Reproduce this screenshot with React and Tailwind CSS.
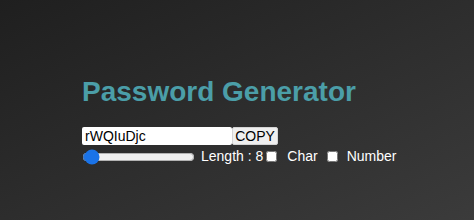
import { useState } from 'react';

const App = () => {
    const [length, setLength] = useState(8);

    return (
        <div className="w-[474px] h-[220px] bg-gradient-to-br from-[#1f1f1f] via-[#2d2d2d] to-[#3b3b3b] font-['Liberation_Sans',Arial,sans-serif] overflow-hidden">
            <div className="pl-[82px] pt-[76px]">
                {/* Title */}
                <h1 className="text-[28px] leading-[32px] font-bold text-[#4b9ea8]">Password Generator</h1>

                {/* Password + copy */}
                <div className="flex mt-[19px] h-[18px]">
                    <input
                        type="text"
                        readOnly
                        value="rWQIuDjc"
                        className="w-[150px] h-[18px] bg-white text-black text-[14px] px-[3px] border-0 outline-none rounded-[2px]"
                    />
                    <button className="h-[18px] w-[46px] bg-[#efefef] text-black text-[14px] leading-[16px] border border-[#d4d4d4] rounded-[2px]">COPY</button>
                </div>

                {/* Controls */}
                <div className="flex items-center mt-[1px] text-white text-[14px]">
                    <input
                        type="range"
                        min="6"
                        max="100"
                        value={length}
                        onChange={(e) => setLength(e.target.value)}
                        className="w-[113px] h-[14px] accent-[#1a73e8]"
                    />
                    <span className="ml-[6px]">Length : {length}</span>
                    <input type="checkbox" className="w-[11px] h-[11px] ml-[3px]" />
                    <span className="ml-[10px]">Char</span>
                    <input type="checkbox" className="w-[11px] h-[11px] ml-[9px]" />
                    <span className="ml-[9px]">Number</span>
                </div>
            </div>
        </div>
    );
};

export default App;
